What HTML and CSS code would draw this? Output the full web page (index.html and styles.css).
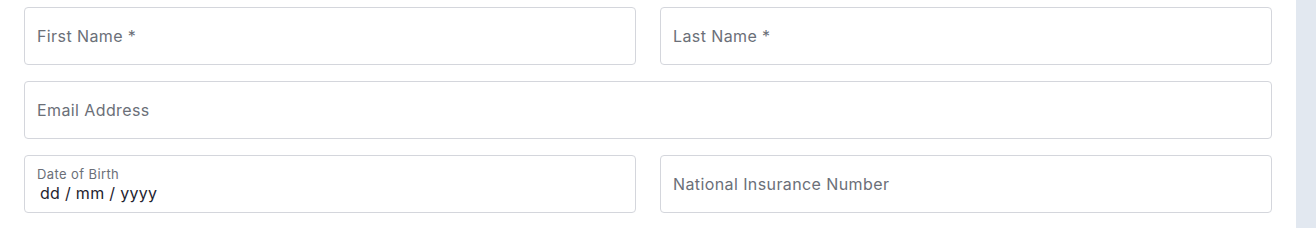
FILE: index.html
```html
<!DOCTYPE html>
<html>
  <head>
    <meta charset="UTF-8">
    <link rel="stylesheet" href="styles.css">
    <title>Personal Details</title>
  </head>
  <body>
    <div class="page">
      <form class="details-form">
        <div class="row two">
          <input class="field" type="text" placeholder="First Name *">
          <input class="field" type="text" placeholder="Last Name *">
        </div>
        <div class="row">
          <input class="field" type="email" placeholder="Email Address">
        </div>
        <div class="row two">
          <label class="field date-field">
            <span class="date-label">Date of Birth</span>
            <input class="date-input" type="text" placeholder="dd / mm / yyyy">
          </label>
          <input class="field" type="text" placeholder="National Insurance Number">
        </div>
      </form>
      <div class="sidebar"></div>
    </div>
  </body>
</html>
```

FILE: styles.css
```css
html, body {
  margin: 0;
  padding: 0;
  background: #fff;
  font-family: Inter, "Open Sans", sans-serif;
}

.page {
  display: flex;
  height: 228px;
}

.details-form {
  flex: 1;
  padding: 7px 24px 0 24px;
  display: flex;
  flex-direction: column;
  gap: 16px;
}

.sidebar {
  width: 20px;
  background: #e2e8f0;
}

.row {
  display: flex;
  gap: 24px;
}

.field {
  flex: 1;
  min-width: 0;
  box-sizing: border-box;
  height: 58px;
  margin: 0;
  padding: 0 12px;
  border: 1px solid #d4d6dc;
  border-radius: 4px;
  background: #fff;
  font-family: inherit;
  font-size: 16px;
  letter-spacing: 0.4px;
  color: #1f2937;
  outline: none;
}

.field::placeholder {
  color: #6b6f78;
}

.date-field {
  display: flex;
  flex-direction: column;
  justify-content: center;
  padding-top: 2px;
}

.date-label {
  font-size: 13px;
  letter-spacing: 0.4px;
  color: #6b6f78;
  line-height: 14px;
}

.date-input {
  border: none;
  padding: 0 0 0 3px;
  margin: 1px 0 0 0;
  font-family: inherit;
  font-size: 16px;
  letter-spacing: 0.3px;
  line-height: 22px;
  outline: none;
  background: transparent;
}

.date-input::placeholder {
  color: #1f2430;
}
```
